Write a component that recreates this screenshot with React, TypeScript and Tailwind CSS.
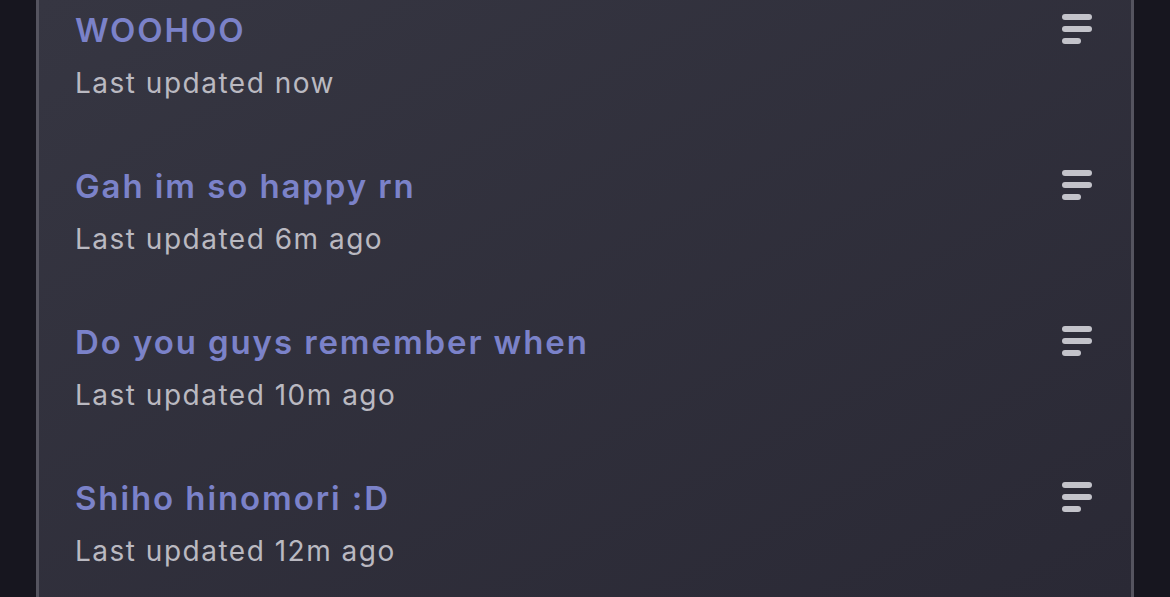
import { useState } from 'react';

type Thread = {
  id: number;
  title: string;
  updated: string;
};

const threads: Thread[] = [
  { id: 1, title: 'WOOHOO', updated: 'now' },
  { id: 2, title: 'Gah im so happy rn', updated: '6m ago' },
  { id: 3, title: 'Do you guys remember when', updated: '10m ago' },
  { id: 4, title: 'Shiho hinomori :D', updated: '12m ago' },
];

function SortIcon() {
  return (
    <svg width="30" height="31" viewBox="0 0 30 31" aria-hidden="true">
      <rect x="0" y="0" width="30" height="6" rx="3" fill="#c3c3ca" />
      <rect x="0" y="12" width="30" height="6" rx="3" fill="#c3c3ca" />
      <rect x="0" y="24" width="19" height="6" rx="3" fill="#c3c3ca" />
    </svg>
  );
}

export default function App() {
  const [items] = useState(threads);

  return (
    <div className="h-[597px] w-[1170px] overflow-hidden bg-[#17161f] font-['Inter','Liberation_Sans',sans-serif]">
      <div className="ml-[36px] flex h-full w-[1098px] flex-col overflow-hidden border-x-[3px] border-[#55545f] bg-gradient-to-br from-[#363642] to-[#2a2935]">
        <ul className="-mt-[22px]">
          {items.map((t) => (
            <li key={t.id} className="flex items-start justify-between pt-[32px] pb-[33px] pl-[36px] pr-[39px]">
              <div>
                <p className="text-[33px] leading-[40px] font-semibold tracking-[1.9px] text-[#7b82c9]">
                  {t.title}
                </p>
                <p className="mt-[15px] text-[28px] leading-[36px] tracking-[1.5px] text-[#bab9c1]">
                  Last updated {t.updated}
                </p>
              </div>
              <div className="mt-[4px]">
                <SortIcon />
              </div>
            </li>
          ))}
        </ul>
      </div>
    </div>
  );
}
